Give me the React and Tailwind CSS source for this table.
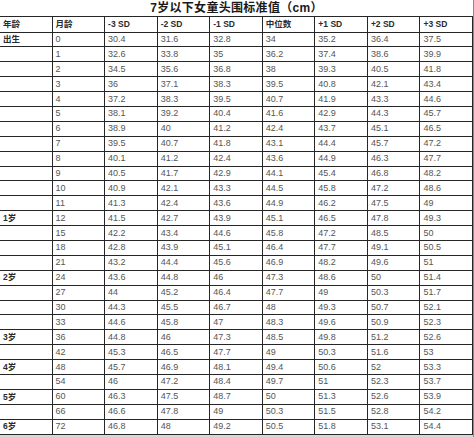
import React from "react";

const header = ["年龄", "月龄", "-3 SD", "-2 SD", "-1 SD", "中位数", "+1 SD", "+2 SD", "+3 SD"];

const rows = [
  ["出生", "0", "30.4", "31.6", "32.8", "34", "35.2", "36.4", "37.5"],
  ["", "1", "32.6", "33.8", "35", "36.2", "37.4", "38.6", "39.9"],
  ["", "2", "34.5", "35.6", "36.8", "38", "39.3", "40.5", "41.8"],
  ["", "3", "36", "37.1", "38.3", "39.5", "40.8", "42.1", "43.4"],
  ["", "4", "37.2", "38.3", "39.5", "40.7", "41.9", "43.3", "44.6"],
  ["", "5", "38.1", "39.2", "40.4", "41.6", "42.9", "44.3", "45.7"],
  ["", "6", "38.9", "40", "41.2", "42.4", "43.7", "45.1", "46.5"],
  ["", "7", "39.5", "40.7", "41.8", "43.1", "44.4", "45.7", "47.2"],
  ["", "8", "40.1", "41.2", "42.4", "43.6", "44.9", "46.3", "47.7"],
  ["", "9", "40.5", "41.7", "42.9", "44.1", "45.4", "46.8", "48.2"],
  ["", "10", "40.9", "42.1", "43.3", "44.5", "45.8", "47.2", "48.6"],
  ["", "11", "41.3", "42.4", "43.6", "44.9", "46.2", "47.5", "49"],
  ["1岁", "12", "41.5", "42.7", "43.9", "45.1", "46.5", "47.8", "49.3"],
  ["", "15", "42.2", "43.4", "44.6", "45.8", "47.2", "48.5", "50"],
  ["", "18", "42.8", "43.9", "45.1", "46.4", "47.7", "49.1", "50.5"],
  ["", "21", "43.2", "44.4", "45.6", "46.9", "48.2", "49.6", "51"],
  ["2岁", "24", "43.6", "44.8", "46", "47.3", "48.6", "50", "51.4"],
  ["", "27", "44", "45.2", "46.4", "47.7", "49", "50.3", "51.7"],
  ["", "30", "44.3", "45.5", "46.7", "48", "49.3", "50.7", "52.1"],
  ["", "33", "44.6", "45.8", "47", "48.3", "49.6", "50.9", "52.3"],
  ["3岁", "36", "44.8", "46", "47.3", "48.5", "49.8", "51.2", "52.6"],
  ["", "42", "45.3", "46.5", "47.7", "49", "50.3", "51.6", "53"],
  ["4岁", "48", "45.7", "46.9", "48.1", "49.4", "50.6", "52", "53.3"],
  ["", "54", "46", "47.2", "48.4", "49.7", "51", "52.3", "53.7"],
  ["5岁", "60", "46.3", "47.5", "48.7", "50", "51.3", "52.6", "53.9"],
  ["", "66", "46.6", "47.8", "49", "50.3", "51.5", "52.8", "54.2"],
  ["6岁", "72", "46.8", "48", "49.2", "50.5", "51.8", "53.1", "54.4"],
];

const font = { fontFamily: '"Liberation Sans", Arial, "Noto Sans CJK SC", sans-serif' };

export default function App() {
  return (
    <div className="flex w-[474px] h-[437px] bg-white overflow-hidden" style={font}>
      <div className="flex flex-col w-[473px]">
        <div className="h-[15.5px] flex items-center justify-center text-[12px] font-bold text-[#1a1a1a] leading-none tracking-[0.3px]">
          7岁以下女童头围标准值（cm）
        </div>
        <div className="border-t border-[#262626]">
          <div className="grid grid-cols-9 h-[16px]">
            {header.map((h, i) => (
              <div
                key={i}
                className="border-b border-r border-[#262626] flex items-center pl-[3px] text-[8.5px] font-bold text-[#2a2a2a] leading-none whitespace-nowrap"
              >
                {h}
              </div>
            ))}
          </div>
          {rows.map((r, ri) => (
            <div key={ri} className="grid grid-cols-9 h-[14.9px]">
              {r.map((c, ci) => (
                <div
                  key={ci}
                  className={
                    "border-b border-r border-[#262626] flex items-center pl-[3px] leading-none whitespace-nowrap " +
                    (ci === 0
                      ? "text-[8.5px] font-bold text-[#2a2a2a]"
                      : "text-[9px] text-[#555]")
                  }
                >
                  {c}
                </div>
              ))}
            </div>
          ))}
        </div>
        <div className="flex-1 bg-[#d8d8d8]" />
      </div>
      <div className="w-[1px] bg-[#8a8a8a]" />
    </div>
  );
}
